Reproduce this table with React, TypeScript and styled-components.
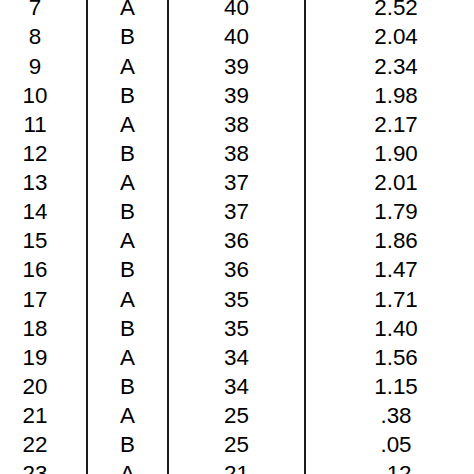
import React from 'react';
import styled, {createGlobalStyle} from 'styled-components';

const GlobalStyle = createGlobalStyle`
  html, body {
    margin: 0;
    padding: 0;
    background: #ffffff;
    overflow: hidden;
  }
`;

const rows: [number, string, number, string][] = [
  [7, 'A', 40, '2.52'],
  [8, 'B', 40, '2.04'],
  [9, 'A', 39, '2.34'],
  [10, 'B', 39, '1.98'],
  [11, 'A', 38, '2.17'],
  [12, 'B', 38, '1.90'],
  [13, 'A', 37, '2.01'],
  [14, 'B', 37, '1.79'],
  [15, 'A', 36, '1.86'],
  [16, 'B', 36, '1.47'],
  [17, 'A', 35, '1.71'],
  [18, 'B', 35, '1.40'],
  [19, 'A', 34, '1.56'],
  [20, 'B', 34, '1.15'],
  [21, 'A', 25, '.38'],
  [22, 'B', 25, '.05'],
  [23, 'A', 21, '.12'],
];

const Page = styled.div`
  width: 474px;
  height: 474px;
  overflow: hidden;
  background: #fff;
`;

const Table = styled.div`
  display: grid;
  grid-template-columns: 104px 81px 137px 180px;
  margin: -6.7px 0 0 -16px;
  font-family: 'Liberation Sans', Arial, sans-serif;
  font-size: 22.4px;
  color: #000;
`;

const Cell = styled.div<{$last?: boolean}>`
  height: 29.14px;
  line-height: 29.14px;
  text-align: center;
  white-space: nowrap;
  border-right: ${(p) => (p.$last ? 'none' : '2px solid #1c1c1c')};
`;

export default function App() {
  return (
    <Page>
      <GlobalStyle />
      <Table>
        {rows.map(([n, g, a, v]) => (
          <React.Fragment key={n}>
            <Cell>{n}</Cell>
            <Cell>{g}</Cell>
            <Cell>{a}</Cell>
            <Cell $last>{v}</Cell>
          </React.Fragment>
        ))}
      </Table>
    </Page>
  );
}
